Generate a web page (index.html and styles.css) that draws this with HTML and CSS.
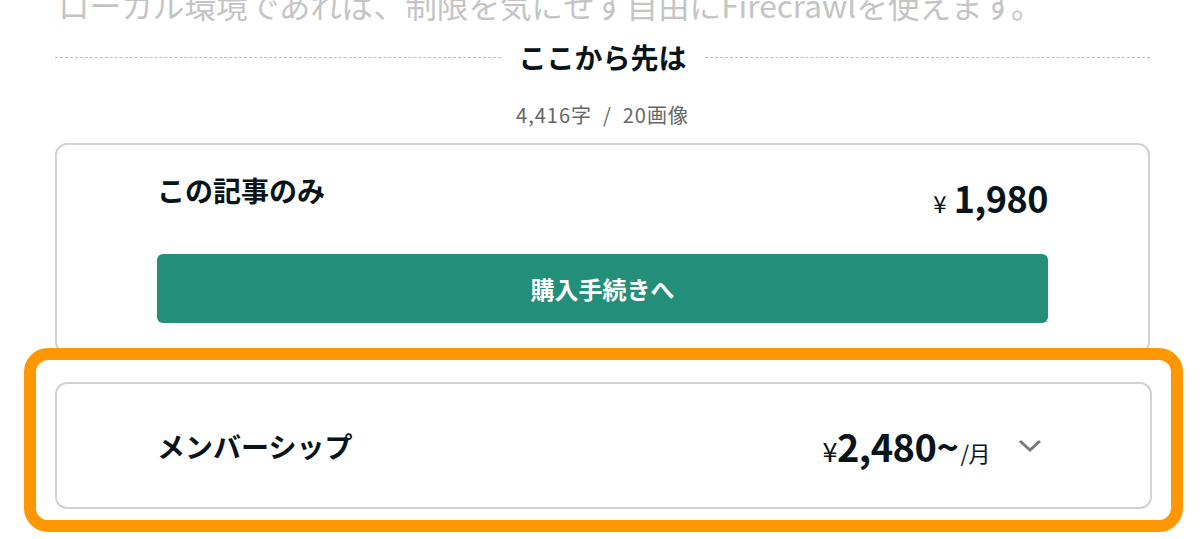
FILE: index.html
```html
<!DOCTYPE html>
<html lang="ja">
<head>
  <meta charset="UTF-8">
  <title>ここから先は</title>
  <link rel="stylesheet" href="styles.css">
</head>
<body>
  <div class="article">
    <p class="lead">ローカル環境であれば、制限を気にせず自由にFirecrawlを使えます。</p>

    <div class="paywall-head">
      <span class="dash"></span>
      <h2>ここから先は</h2>
      <span class="dash"></span>
    </div>
    <div class="count">4,416字 &nbsp;/&nbsp; 20画像</div>

    <div class="plan-card">
      <div class="plan-row">
        <div class="plan-name">この記事のみ</div>
        <div class="plan-price single"><span class="yen">¥</span> 1,980</div>
      </div>
      <button class="buy-btn" type="button">購入手続きへ</button>
    </div>

    <div class="highlight">
      <div class="plan-card member">
        <div class="plan-name">メンバーシップ</div>
        <div class="plan-price"><span class="yen">¥</span>2,480~<span class="per">/月</span></div>
        <svg class="chevron" width="24" height="14" viewBox="0 0 24 14">
          <path d="M2 2 L12 11 L22 2" fill="none" stroke="#7a7a7a" stroke-width="3"/>
        </svg>
      </div>
    </div>
  </div>
</body>
</html>
```

FILE: styles.css
```css
body {
  margin: 0;
  background: #fff;
  color: #08131a;
  font-family: "Noto Sans CJK JP", "Noto Sans", sans-serif;
  overflow: hidden;
}
.article {
  width: 1095px;
  margin-left: 55px;
}
.lead {
  margin: -19px 0 0;
  padding-left: 3px;
  font-size: 31.6px;
  line-height: 47px;
  color: #c4c4c4;
  white-space: nowrap;
}
.paywall-head {
  display: flex;
  align-items: center;
  gap: 18px;
  margin-top: 9px;
}
.paywall-head .dash {
  flex: 1;
  border-top: 1px dashed #bdbdbd;
}
.paywall-head h2 {
  margin: 0;
  font-size: 28px;
  line-height: 40px;
  font-weight: bold;
}
.count {
  margin-top: 25px;
  text-align: center;
  font-size: 20px;
  line-height: 26px;
  letter-spacing: 1px;
  color: #666;
}
.plan-card {
  margin-top: 15px;
  border: 2px solid #d2d2d2;
  border-radius: 12px;
  padding: 0 100px 29px;
  background: #fff;
}
.plan-row {
  display: flex;
  justify-content: space-between;
  align-items: flex-start;
  padding-top: 25px;
}
.plan-name {
  font-size: 28px;
  line-height: 40px;
  font-weight: bold;
}
.plan-price {
  font-size: 38px;
  line-height: 40px;
  font-weight: bold;
  letter-spacing: -0.5px;
}
.plan-price.single {
  margin-top: 7px;
  font-size: 36px;
}
.yen {
  font-size: 24px;
  line-height: 1;
  font-weight: normal;
}
.member .yen {
  font-size: 27px;
}
.per {
  font-size: 22px;
  line-height: 1;
  font-weight: normal;
  margin-left: 2px;
}
.buy-btn {
  display: block;
  width: 100%;
  height: 69px;
  margin-top: 37px;
  border: none;
  border-radius: 6px;
  background: #248f78;
  color: #fff;
  font-family: inherit;
  font-size: 24px;
  font-weight: bold;
  cursor: pointer;
}
.highlight {
  position: relative;
  margin: -6px -33px 0 -31px;
  border: 12px solid #ff9800;
  border-radius: 24px;
  padding: 22px 19px 11px;
  background: #fff;
}
.plan-card.member {
  margin-top: 0;
  height: 123px;
  padding: 0 108px 0 100px;
  display: flex;
  align-items: center;
}
.member .plan-name {
  flex: 1;
}
.chevron {
  margin-left: 28px;
}
```
